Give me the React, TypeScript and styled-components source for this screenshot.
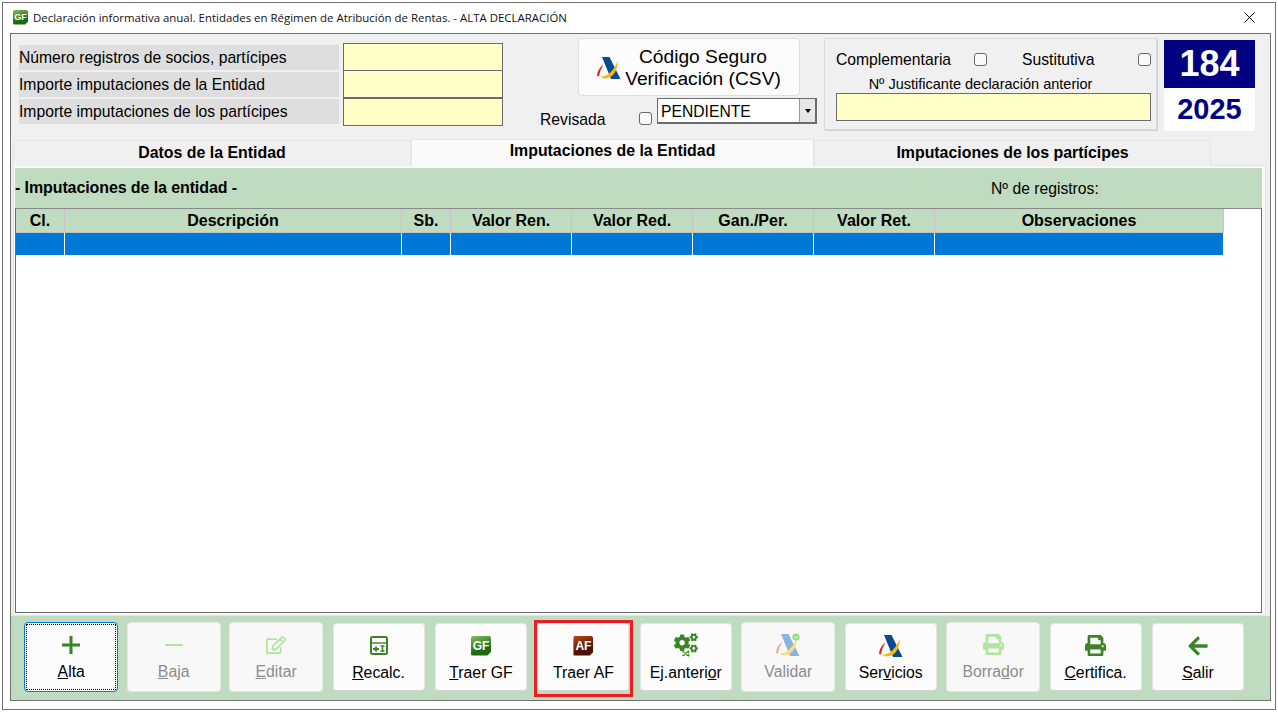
import React from 'react';
import styled, { createGlobalStyle } from 'styled-components';
import { FaArrowLeft, FaCogs, FaPrint, FaRandom, FaRegEdit } from 'react-icons/fa';

const GREEN = '#3c8526';
const GREEN_OFF = '#b0e5a0';

const GlobalStyle = createGlobalStyle`
  html, body {
    margin: 0;
    height: 100%;
    overflow: hidden;
    background: #fff;
    font-family: "Liberation Sans", Arial, sans-serif;
    font-size: 15.7px;
    color: #000;
  }
  * { box-sizing: border-box; }
`;

const Window = styled.div`
  display: flex;
  flex-direction: column;
  width: 1274px;
  height: 708px;
  margin: 2px 0 0 2px;
  border: 1px solid #707070;
  background: #fff;
`;

const TitleBar = styled.div`
  display: flex;
  align-items: center;
  flex: 0 0 30px;
  padding: 0 20px 2px 10px;
  gap: 5px;
  font-family: "Open Sans", "Noto Sans", sans-serif;
  font-size: 11.45px;
  color: #111;
`;

const TitleText = styled.span`
  flex: 1;
`;

const Panel = styled.div`
  display: flex;
  flex-direction: column;
  flex: 1;
  margin: 0 4px 8px 7px;
  border: 1px solid #707070;
  background: #f0f0f0;
`;

const TopRow = styled.div`
  display: flex;
  align-items: flex-start;
  flex: 0 0 104px;
`;

const FormGrid = styled.div`
  display: grid;
  grid-template-columns: 320px 160px;
  grid-template-rows: 27px 27px 28px;
  column-gap: 4px;
  margin: 9px 0 0 8px;
`;

const FieldLabel = styled.label`
  display: flex;
  align-items: center;
  height: 25px;
  margin-top: 2px;
  background: #dedede;
  line-height: 1;
`;

const YellowInput = styled.input<{ $nudge?: boolean }>`
  display: block;
  width: 100%;
  height: 28px;
  margin-top: ${(p) => (p.$nudge ? '1px' : '0')};
  border: 1px solid #6b6b6b;
  background: #ffffc8;
  outline: none;
`;

const MiddleColumn = styled.div`
  display: flex;
  flex-direction: column;
  width: 277px;
  margin-left: 37px;
`;

const CsvButton = styled.button`
  display: flex;
  align-items: center;
  justify-content: center;
  gap: 4px;
  width: 222px;
  height: 58px;
  margin: 4px 0 0 38px;
  padding: 2px 0 0;
  border: 1px solid #e0e0e0;
  border-radius: 4px;
  background: #fcfcfc;
  font: 19.2px/22px "Liberation Sans", Arial, sans-serif;
  color: #000;
`;

const ReviewRow = styled.div`
  display: flex;
  align-items: flex-end;
  height: 26px;
  margin-top: 2px;
`;

const ReviewLabel = styled.span`
  width: 99px;
  line-height: 18px;
  margin-bottom: -5px;
`;

const Check = styled.input.attrs({ type: 'checkbox' })`
  appearance: none;
  flex: none;
  width: 13px;
  height: 13px;
  margin: 0;
  border: 1px solid #666;
  border-radius: 3px;
  background: #fafafa;
`;

const ReviewCheck = styled(Check)`
  margin-bottom: -1px;
`;

const Select = styled.div`
  display: flex;
  width: 160px;
  height: 26px;
  margin-left: 5px;
  border: 1px solid #6b6b6b;
  border-right-width: 2px;
  border-bottom-width: 2px;
  background: #fff;
`;

const SelectValue = styled.span`
  flex: 1;
  padding-left: 3px;
  line-height: 25px;
`;

const SelectArrow = styled.span`
  display: flex;
  align-items: center;
  justify-content: center;
  width: 16px;
  border-left: 1px solid #9a9a9a;
  background: #e6e6e6;

  &::before {
    content: '';
    border: 3.5px solid transparent;
    border-top: 4px solid #000;
    border-bottom: 0;
  }
`;

const PriorGroup = styled.div`
  width: 333px;
  height: 92px;
  margin: 4px 0 0 7px;
  padding: 7px 5px 0 11px;
  border: 1px solid #dcdcdc;
  box-shadow: 1px 1px 0 #d0d0d0;
  background: #f0f0f0;
`;

const CheckRow = styled.div`
  display: flex;
  align-items: center;
  height: 26px;
`;

const CheckLabel = styled.span<{ $w: number }>`
  width: ${(p) => p.$w}px;
  padding-top: 2px;
`;

const Caption = styled.div`
  height: 18px;
  margin-top: 3px;
  padding-right: 26px;
  text-align: center;
  font-size: 14.5px;
  line-height: 18px;
`;

const ModelBadge = styled.div`
  width: 91px;
  margin: 6px 0 0 7px;
  background: #fff;
  text-align: center;
  font-weight: 700;
  color: #000080;
`;

const ModelCode = styled.div`
  height: 48px;
  background: #000080;
  color: #fff;
  font-size: 36px;
  line-height: 48px;
`;

const ModelYear = styled.div`
  height: 43px;
  font-size: 29px;
  line-height: 43px;
`;

const Tabs = styled.div`
  display: grid;
  grid-template-columns: 398px 403px 397px;
  align-items: end;
  height: 27px;
  margin-left: 2px;
`;

const Tab = styled.div<{ $active?: boolean }>`
  height: ${(p) => (p.$active ? '27px' : '26px')};
  margin-bottom: -1px;
  padding-top: ${(p) => (p.$active ? '2px' : '3px')};
  border: 1px solid #e6e6e6;
  border-bottom: 0;
  background: ${(p) => (p.$active ? '#fafafa' : '#f0f0f0')};
  text-align: center;
  font-size: 15.9px;
  font-weight: 700;
  line-height: 18px;
  position: relative;
  z-index: ${(p) => (p.$active ? 1 : 0)};
`;

const TabBody = styled.div`
  display: flex;
  flex-direction: column;
  margin: 0 4px 0 2px;
  padding: 2px 3px 2px 1px;
  border: 1px solid #e2e2e2;
  background: #f9f9f9;
`;

const Band = styled.div`
  display: flex;
  align-items: center;
  height: 40px;
  padding: 0 0 1px 0;
  background: #c0dcc0;
`;

const BandTitle = styled.span`
  flex: 0 0 976px;
  font-size: 16px;
  font-weight: 700;
  letter-spacing: -0.1px;
`;

const RegisterCount = styled.span`
  padding-top: 2px;
`;

const GridBox = styled.div`
  height: 405px;
  border: 1px solid #6b6b6b;
  border-top-color: #8a8a8a;
  background: #fff;
`;

const GridRow = styled.div<{ $head?: boolean }>`
  display: grid;
  grid-template-columns: 49px 337px 49px 121px 121px 121px 121px 289px;
  width: 1208px;
  height: ${(p) => (p.$head ? '24px' : '22px')};
  background: ${(p) => (p.$head ? '#c0dcc0' : '#0078d7')};
  border-bottom: ${(p) => (p.$head ? '1px solid #c4c4c4' : '0')};
`;

const GridCell = styled.div<{ $head?: boolean }>`
  border-right: 1px solid ${(p) => (p.$head ? '#c4c4c4' : '#fff')};
  text-align: center;
  font-size: 16px;
  font-weight: 700;
  line-height: 23px;
`;

const Toolbar = styled.div`
  flex: 1;
  display: grid;
  grid-template-columns: repeat(12, 102.45px);
  align-items: center;
  padding: 0 0 3px 9px;
  background: #c0dcc0;
`;

const ActionButton = styled.button<{ $focused?: boolean; $marked?: boolean }>`
  position: relative;
  display: flex;
  flex-direction: column;
  align-items: center;
  justify-self: center;
  width: ${(p) => (p.$focused ? '94px' : '92px')};
  height: ${(p) => (p.$focused ? '70px' : '68px')};
  padding: 0;
  border: 1px solid ${(p) => (p.$focused ? '#0078d7' : '#e4e4e4')};
  border-bottom-color: ${(p) => (p.$focused ? '#0078d7' : '#d4d4d4')};
  border-radius: 4px;
  background: #fcfcfc;
  font: 15.8px/18px "Liberation Sans", Arial, sans-serif;
  color: #000;

  &:disabled {
    width: 94px;
    height: 70px;
    border-color: #e6e6e6;
    background: #f8f8f8;
    color: #8c8c8c;
  }

  ${(p) =>
    p.$focused &&
    `&::before {
      content: '';
      position: absolute;
      inset: 1px;
      border: 1px dotted #000;
    }`}

  ${(p) =>
    p.$marked &&
    `&::after {
      content: '';
      position: absolute;
      left: -4px;
      top: -4px;
      right: -5px;
      bottom: -7px;
      border: 3px solid #ed1c24;
    }`}
`;

const IconSlot = styled.span<{ $off?: boolean }>`
  display: flex;
  flex-direction: column;
  align-items: center;
  justify-content: center;
  height: 24px;
  margin-top: 10px;
  color: ${(p) => (p.$off ? GREEN_OFF : GREEN)};
`;

const ButtonText = styled.span`
  margin-top: 6px;
`;

const TileIcon = styled.span<{ $size: number; $from: string; $to: string }>`
  display: inline-flex;
  flex: none;
  align-items: center;
  justify-content: center;
  width: ${(p) => p.$size}px;
  height: ${(p) => p.$size}px;
  border-radius: 2px 2px 0 2px;
  clip-path: polygon(0 0, 100% 0, 100% 82%, 82% 100%, 0 100%);
  background: linear-gradient(160deg, ${(p) => p.$from}, ${(p) => p.$to} 65%);
  color: #fff;
  font: 700 ${(p) => Math.round(p.$size * 0.62)}px/1 "Liberation Sans", Arial, sans-serif;
`;

const GfTile = ({ size }: { size: number }) => (
  <TileIcon $size={size} $from="#86c05c" $to="#1d6a12">
    GF
  </TileIcon>
);

const AfTile = () => (
  <TileIcon $size={20} $from="#c24a10" $to="#4c1208">
    AF
  </TileIcon>
);

const AeatLogo = ({ size, faded, tick }: { size: number; faded?: boolean; tick?: boolean }) => (
  <svg width={size} height={size} viewBox="0 0 24 24">
    <path d="M5 1 L12.5 1 L23.5 23 L14 23 Z" fill={faded ? '#8ab4dc' : '#0a4a90'} />
    <path d="M3 20.5 Q14 21 21 4.5 Q20 22.5 6.5 22.5 Z" fill={faded ? '#f6dc86' : '#f2b91c'} />
    <path d="M0 20 Q0.5 13 6.5 8.5 Q3 14 1.8 20.5 Z" fill={faded ? '#eda6a0' : '#d0281e'} />
    {tick && (
      <g>
        <circle cx="20" cy="4" r="3.6" fill="#8fdc86" />
        <path d="M18.2 4 L19.6 5.4 L22 2.8" fill="none" stroke="#fff" strokeWidth="1" />
      </g>
    )}
  </svg>
);

const PlusIcon = () => (
  <svg width="18" height="18" viewBox="0 0 18 18">
    <path d="M9 0V18M0 9H18" stroke="#6aa558" strokeWidth="3.4" />
    <path d="M9 0V18M0 9H18" stroke="#2f7a1c" strokeWidth="1.6" />
  </svg>
);

const MinusIcon = () => (
  <svg width="18" height="18" viewBox="0 0 18 18">
    <path d="M0 9H18" stroke={GREEN_OFF} strokeWidth="2" />
  </svg>
);

const CalcIcon = () => (
  <svg width="18" height="19" viewBox="0 0 18 19">
    <rect x="1" y="1" width="16" height="17" rx="1.5" fill="#fff" stroke={GREEN} strokeWidth="2" />
    <path d="M1 7H17" stroke={GREEN} strokeWidth="1.4" />
    <path d="M3 13H9M6 10.5V15.5" stroke={GREEN} strokeWidth="2" />
    <path d="M10.5 10H14.5M10.5 15H14.5M12.5 9.5V16" stroke={GREEN} strokeWidth="1.6" />
  </svg>
);

const GearsIcon = () => (
  <>
    <FaCogs size={24} style={{ marginTop: -2, marginBottom: -3 }} />
    <FaRandom size={8} />
  </>
);

const actions = [
  { key: 'alta', pre: '', hot: 'A', post: 'lta', icon: <PlusIcon />, focused: true },
  { key: 'baja', pre: '', hot: 'B', post: 'aja', icon: <MinusIcon />, off: true },
  { key: 'editar', pre: '', hot: 'E', post: 'ditar', icon: <FaRegEdit size={20} />, off: true },
  { key: 'recalc', pre: '', hot: 'R', post: 'ecalc.', icon: <CalcIcon /> },
  { key: 'gf', pre: '', hot: 'T', post: 'raer GF', icon: <GfTile size={20} /> },
  { key: 'af', pre: 'Traer AF', hot: '', post: '', icon: <AfTile />, marked: true },
  { key: 'ej', pre: 'Ej.anteri', hot: 'o', post: 'r', icon: <GearsIcon /> },
  { key: 'validar', pre: 'Validar', hot: '', post: '', icon: <AeatLogo size={24} faded tick />, off: true },
  { key: 'servicios', pre: 'Ser', hot: 'v', post: 'icios', icon: <AeatLogo size={24} /> },
  { key: 'borrador', pre: 'Borra', hot: 'd', post: 'or', icon: <FaPrint size={21} />, off: true },
  { key: 'certifica', pre: '', hot: 'C', post: 'ertifica.', icon: <FaPrint size={21} /> },
  { key: 'salir', pre: '', hot: 'S', post: 'alir', icon: <FaArrowLeft size={22} /> },
];

const columns = ['Cl.', 'Descripción', 'Sb.', 'Valor Ren.', 'Valor Red.', 'Gan./Per.', 'Valor Ret.', 'Observaciones'];

export default function App() {
  return (
    <>
      <GlobalStyle />
      <Window>
        <TitleBar>
          <GfTile size={15} />
          <TitleText>Declaración informativa anual. Entidades en Régimen de Atribución de Rentas. - ALTA DECLARACIÓN</TitleText>
          <svg width="11" height="11" viewBox="0 0 11 11">
            <path d="M0.5 0.5L10.5 10.5M10.5 0.5L0.5 10.5" stroke="#000" strokeWidth="1" />
          </svg>
        </TitleBar>
        <Panel>
          <TopRow>
            <FormGrid>
              <FieldLabel>Número registros de socios, partícipes</FieldLabel>
              <YellowInput />
              <FieldLabel>Importe imputaciones de la Entidad</FieldLabel>
              <YellowInput />
              <FieldLabel>Importe imputaciones de los partícipes</FieldLabel>
              <YellowInput $nudge />
            </FormGrid>
            <MiddleColumn>
              <CsvButton>
                <AeatLogo size={24} />
                <span>
                  Código Seguro
                  <br />
                  Verificación (CSV)
                </span>
              </CsvButton>
              <ReviewRow>
                <ReviewLabel>Revisada</ReviewLabel>
                <ReviewCheck />
                <Select>
                  <SelectValue>PENDIENTE</SelectValue>
                  <SelectArrow />
                </Select>
              </ReviewRow>
            </MiddleColumn>
            <PriorGroup>
              <CheckRow>
                <CheckLabel $w={138}>Complementaria</CheckLabel>
                <Check />
                <CheckLabel $w={35} />
                <CheckLabel $w={116}>Sustitutiva</CheckLabel>
                <Check />
              </CheckRow>
              <Caption>Nº Justificante declaración anterior</Caption>
              <YellowInput />
            </PriorGroup>
            <ModelBadge>
              <ModelCode>184</ModelCode>
              <ModelYear>2025</ModelYear>
            </ModelBadge>
          </TopRow>
          <Tabs>
            <Tab>Datos de la Entidad</Tab>
            <Tab $active>Imputaciones de la Entidad</Tab>
            <Tab>Imputaciones de los partícipes</Tab>
          </Tabs>
          <TabBody>
            <Band>
              <BandTitle>- Imputaciones de la entidad -</BandTitle>
              <RegisterCount>Nº de registros:</RegisterCount>
            </Band>
            <GridBox>
              <GridRow $head>
                {columns.map((c) => (
                  <GridCell $head key={c}>
                    {c}
                  </GridCell>
                ))}
              </GridRow>
              <GridRow>
                {columns.map((c) => (
                  <GridCell key={c} />
                ))}
              </GridRow>
            </GridBox>
          </TabBody>
          <Toolbar>
            {actions.map((a) => (
              <ActionButton key={a.key} disabled={a.off} $focused={a.focused} $marked={a.marked}>
                <IconSlot $off={a.off}>{a.icon}</IconSlot>
                <ButtonText>
                  {a.pre}
                  {a.hot && <u>{a.hot}</u>}
                  {a.post}
                </ButtonText>
              </ActionButton>
            ))}
          </Toolbar>
        </Panel>
      </Window>
    </>
  );
}
